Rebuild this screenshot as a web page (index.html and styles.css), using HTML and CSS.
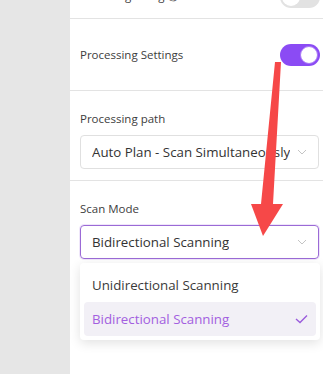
FILE: index.html
```html
<!DOCTYPE html>
<html>
<head>
<meta charset="utf-8">
<link rel="stylesheet" href="styles.css">
</head>
<body>
<div class="page">
  <div class="side"></div>
  <div class="panel">
    <div class="row row-top">
      <span class="row-text">Color Engraving ⓘ</span>
      <span class="toggle off"><span class="knob"></span></span>
    </div>
    <div class="row row-switch">
      <span class="row-text">Processing Settings</span>
      <span class="toggle on"><span class="knob"></span></span>
    </div>
    <div class="field">
      <div class="label">Processing path</div>
      <div class="select">
        <span class="value">Auto Plan - Scan Simultaneously</span>
        <svg class="chev" width="10" height="6" viewBox="0 0 10 6"><path d="M1 1 L5 5 L9 1" fill="none" stroke="#c4c4c4" stroke-width="1"/></svg>
      </div>
    </div>
    <div class="field last">
      <div class="label">Scan Mode</div>
      <div class="select active">
        <span class="value">Bidirectional Scanning</span>
        <svg class="chev" width="10" height="6" viewBox="0 0 10 6"><path d="M1 1 L5 5 L9 1" fill="none" stroke="#c4c4c4" stroke-width="1"/></svg>
      </div>
      <div class="dropdown">
        <div class="opt">Unidirectional Scanning</div>
        <div class="opt sel">Bidirectional Scanning
          <svg class="check" width="13" height="10" viewBox="0 0 13 10"><path d="M1 5 L5 8.5 L12 1.5" fill="none" stroke="#9a5bdc" stroke-width="1.4"/></svg>
        </div>
      </div>
    </div>
  </div>
  <svg class="arrow" width="323" height="374" viewBox="0 0 323 374">
    <polygon points="275,62 281,62 273,204 283,204 263,236 251,204 261,204" fill="#f64848"/>
  </svg>
</div>
</body>
</html>
```
FILE: styles.css
```css
html, body {
  margin: 0;
  padding: 0;
  background: #ffffff;
}
.page {
  position: relative;
  width: 323px;
  height: 374px;
  display: flex;
  overflow: hidden;
  font-family: "Open Sans", "Noto Sans", sans-serif;
}
.side {
  width: 70px;
  background: #e6e6e6;
  flex: none;
}
.panel {
  flex: 1;
  min-width: 0;
  display: flex;
  flex-direction: column;
  background: #fff;
}
.row {
  display: flex;
  align-items: center;
  justify-content: space-between;
  padding: 0 3px 0 10px;
  border-bottom: 1px solid #e3e3e3;
}
.row-top {
  height: 18px;
  align-items: flex-end;
  overflow: hidden;
}
.row-top .row-text {
  margin-bottom: 14px;
}
.row-top .toggle {
  margin-bottom: 10px;
}
.row-switch {
  height: 71px;
}
.row-text {
  font-size: 11.5px;
  color: #3d3d3d;
}
.toggle {
  width: 40px;
  height: 22px;
  border-radius: 11px;
  box-sizing: border-box;
  padding: 2px;
  display: flex;
  align-items: center;
  flex: none;
}
.toggle.on {
  background: #8b4bf4;
  justify-content: flex-end;
}
.toggle.off {
  background: #e2e2e2;
  justify-content: flex-start;
}
.knob {
  width: 18px;
  height: 18px;
  border-radius: 50%;
  background: #fff;
  box-sizing: border-box;
}
.toggle.on .knob {
  border: 1px solid #a877f6;
}
.field {
  position: relative;
  padding: 19px 4px 11px 10px;
  border-bottom: 1px solid #e3e3e3;
  height: 59px;
}
.field.last {
  border-bottom: none;
}
.label {
  font-size: 11.5px;
  color: #3d3d3d;
  height: 17px;
  line-height: 17px;
  margin-bottom: 8px;
}
.select {
  height: 34px;
  box-sizing: border-box;
  border: 1px solid #e0e0e0;
  border-radius: 4px;
  display: flex;
  align-items: center;
  justify-content: space-between;
  padding: 0 11px 0 11px;
  min-width: 0;
}
.select.active {
  border-color: #9b6ad6;
  box-shadow: 0 0 0 1px #efe6fa;
}
.value {
  font-size: 13.3px;
  color: #333;
  white-space: nowrap;
  overflow: hidden;
  min-width: 0;
}
.chev {
  flex: none;
  margin-left: 4px;
}
.dropdown {
  position: absolute;
  left: 10px;
  top: 82px;
  width: 240px;
  box-sizing: border-box;
  background: #fff;
  border-radius: 4px;
  box-shadow: 0 3px 12px rgba(0, 0, 0, 0.12);
  padding: 5px 4px 4px 4px;
}
.opt {
  height: 34px;
  display: flex;
  align-items: center;
  justify-content: space-between;
  padding: 0 8px 0 8px;
  font-size: 13.3px;
  color: #3a3a3a;
  border-radius: 4px;
}
.opt.sel {
  background: #f2f0f6;
  color: #a35fe0;
}
.arrow {
  position: absolute;
  left: 0;
  top: 0;
  pointer-events: none;
}
```
